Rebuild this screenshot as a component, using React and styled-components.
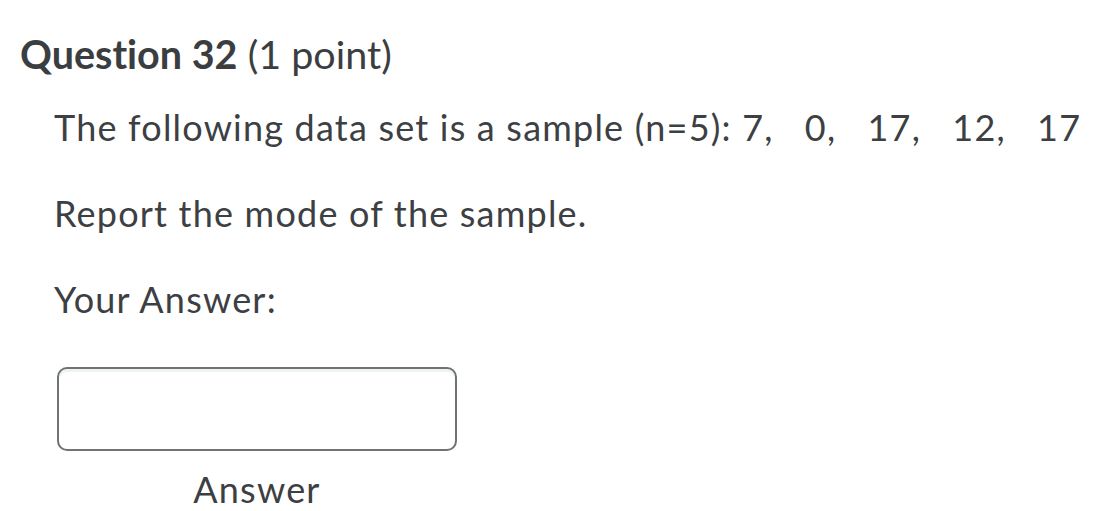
import React from 'react'
import styled, { createGlobalStyle } from 'styled-components'

const GlobalStyle = createGlobalStyle`
    html, body {
        margin: 0;
        padding: 0;
        background: #ffffff;
    }
    body {
        font-family: Lato, "Noto Sans", sans-serif;
        color: #3d4043;
        font-variant-ligatures: none;
    }
`

const App = () => {
    return (
        <>
            <GlobalStyle />
            <QuestionWrapper>
                <QuestionTitle>
                    <strong>Question 32</strong> <span>(1 point)</span>
                </QuestionTitle>
                <QuestionBody>
                    <Paragraph>
                        The following data set is a sample (n=5): 7,&nbsp;&nbsp; 0,&nbsp;&nbsp; 17,&nbsp;&nbsp; 12,&nbsp;&nbsp; 17
                    </Paragraph>
                    <Paragraph>Report the mode of the sample.</Paragraph>
                    <Paragraph last>Your Answer:</Paragraph>
                    <AnswerField>
                        <AnswerInput type='text' aria-label='Answer' />
                        <AnswerLabel>Answer</AnswerLabel>
                    </AnswerField>
                </QuestionBody>
            </QuestionWrapper>
        </>
    )
}

export default App

export const QuestionWrapper = styled.div`
    padding: 26px 0 0 20px;
`
export const QuestionTitle = styled.h2`
    margin: 0;
    font-size: 39.5px;
    line-height: 56px;
    color: #3b3e41;
    font-weight: 400;

    & strong {
        font-weight: 700;
    }
`
export const QuestionBody = styled.div`
    padding-left: 34px;
    margin-top: 22px;
`
export const Paragraph = styled.p`
    margin: 0 0 ${props => (props.last ? '0' : '40px')};
    font-size: 36px;
    line-height: 46px;
    letter-spacing: 1.2px;
    color: #3d4043;
    white-space: nowrap;
`
export const AnswerField = styled.div`
    display: flex;
    flex-direction: column;
    align-items: center;
    width: 400px;
    margin-left: 3px;
    margin-top: 45px;
`
export const AnswerInput = styled.input`
    box-sizing: border-box;
    width: 400px;
    height: 84px;
    border: 2px solid #6e7376;
    border-radius: 10px;
    box-shadow: inset 0 3px 0 0 #eff1f2;
    background: #ffffff;
    outline: none;
`
export const AnswerLabel = styled.span`
    margin-top: 15px;
    font-size: 36px;
    line-height: 46px;
    letter-spacing: 1.2px;
    color: #3d4043;
`
